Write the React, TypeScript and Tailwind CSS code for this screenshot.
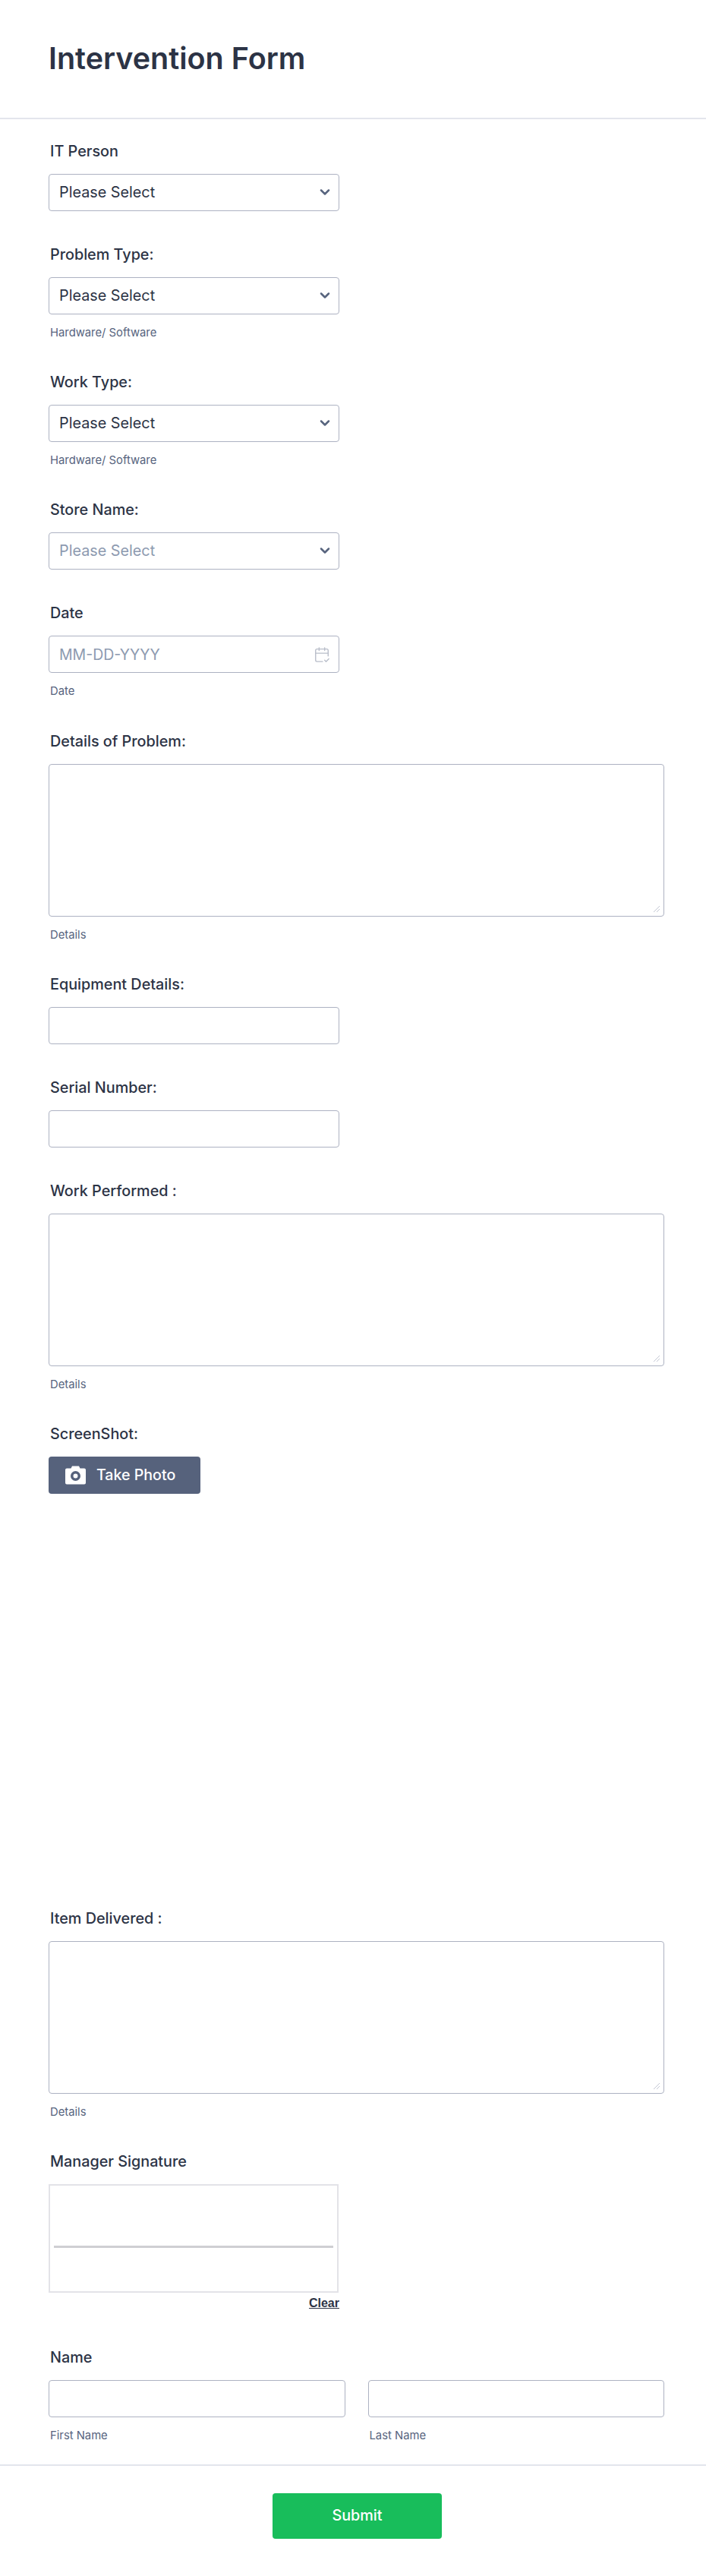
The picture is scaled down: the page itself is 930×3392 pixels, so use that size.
import { CalendarCheck2, ChevronDown } from "lucide-react";

const fieldBorder = "rounded-[4px] border border-[#adb2c2] bg-white";

function Label({ children }: { children: React.ReactNode }) {
  return <label className="mb-[18px] block h-[24px] px-[2px] text-[19.8px] leading-[24px] font-[450] text-[#2c3345]">{children}</label>;
}

function Sub({ children }: { children: React.ReactNode }) {
  return <div className="mt-[14px] h-[20px] px-[2px] text-[14.8px] leading-[20px] text-[#57647e]">{children}</div>;
}

function SelectBox({ muted }: { muted?: boolean }) {
  return (
    <div className="relative w-[383px]">
      <select
        className={`h-[49px] w-full appearance-none px-[13px] text-[19.8px] outline-none ${fieldBorder} ${muted ? "text-[#8d9ab0]" : "text-[#2c3345]"}`}
      >
        <option>Please Select</option>
      </select>
      <ChevronDown className="pointer-events-none absolute right-[9px] top-[14px] size-[20px] text-[#57647e]" strokeWidth={3} />
    </div>
  );
}

function TextBox() {
  return <input type="text" className={`block h-[49px] w-[383px] outline-none ${fieldBorder}`} />;
}

function Area() {
  return (
    <div className="relative">
      <textarea className={`block h-[201px] w-full resize-none outline-none ${fieldBorder}`} />
      <svg width="10" height="10" viewBox="0 0 10 10" className="pointer-events-none absolute bottom-[5px] right-[5px]">
        <path d="M1 9 9 1M5 9 9 5" stroke="#c4c8d4" strokeWidth="1" fill="none" />
      </svg>
    </div>
  );
}

function CameraIcon() {
  return (
    <svg width="27" height="25" viewBox="0 0 27 25" className="shrink-0">
      <path
        fill="#fff"
        fillRule="evenodd"
        d="M9 0.5h9l1.5 3h5.5a2 2 0 0 1 2 2v17a2 2 0 0 1-2 2H2a2 2 0 0 1-2-2v-17a2 2 0 0 1 2-2h5.5zM13.5 7a6.5 6.5 0 1 0 0 13 6.5 6.5 0 0 0 0-13zM13.5 10.5a3 3 0 1 1 0 6 3 3 0 0 1 0-6z"
      />
    </svg>
  );
}

export default function App() {
  return (
    <div className="flex min-h-[3392px] w-[930px] flex-col bg-white font-['Inter',sans-serif] text-[#2c3345]">
      <header className="h-[157px] border-b-2 border-[#e3e5ed] pl-[64px] pt-[50px]">
        <h1 className="text-[39.5px] leading-[54px] font-semibold">Intervention Form</h1>
      </header>

      <main className="pl-[64px] pr-[55px] pt-[30px]">
        <div className="pb-[45px]">
          <Label>IT Person</Label>
          <SelectBox />
        </div>
        <div className="pb-[43px]">
          <Label>Problem Type:</Label>
          <SelectBox />
          <Sub>Hardware/ Software</Sub>
        </div>
        <div className="pb-[43px]">
          <Label>Work Type:</Label>
          <SelectBox />
          <Sub>Hardware/ Software</Sub>
        </div>
        <div className="pb-[45px]">
          <Label>Store Name:</Label>
          <SelectBox muted />
        </div>
        <div className="pb-[44px]">
          <Label>Date</Label>
          <div className="relative w-[383px]">
            <input
              type="text"
              placeholder="MM-DD-YYYY"
              className={`block h-[49px] w-full px-[13px] text-[19.5px] outline-none placeholder:text-[#8d9ab0] ${fieldBorder}`}
            />
            <CalendarCheck2 className="pointer-events-none absolute right-[12px] top-[14px] size-[22px] text-[#b8bdc9]" strokeWidth={1.5} />
          </div>
          <Sub>Date</Sub>
        </div>
        <div className="pb-[43px]">
          <Label>Details of Problem:</Label>
          <Area />
          <Sub>Details</Sub>
        </div>
        <div className="pb-[45px]">
          <Label>Equipment Details:</Label>
          <TextBox />
        </div>
        <div className="pb-[45px]">
          <Label>Serial Number:</Label>
          <TextBox />
        </div>
        <div className="pb-[43px]">
          <Label>Work Performed :</Label>
          <Area />
          <Sub>Details</Sub>
        </div>
        <div className="pb-[547px]">
          <Label>ScreenShot:</Label>
          <button className="flex h-[49px] w-[200px] items-center gap-[14px] rounded-[4px] bg-[#56627c] pl-[22px] text-[19.6px] font-[450] text-white">
            <CameraIcon />
            Take Photo
          </button>
        </div>
        <div className="pb-[43px]">
          <Label>Item Delivered :</Label>
          <Area />
          <Sub>Details</Sub>
        </div>
        <div className="pb-[49px]">
          <Label>Manager Signature</Label>
          <div className="h-[143px] w-[382px] border-2 border-[#e3e3e8] px-[5px] pt-[79px]">
            <div className="h-[3px] w-full bg-[#cfcfd3]" />
          </div>
          <div className="w-[383px] pt-[3px] text-right leading-[20px]">
            <span className="font-['Liberation_Sans',sans-serif] text-[16px] leading-[20px] font-bold text-[#2c3345] underline">Clear</span>
          </div>
        </div>
        <div>
          <Label>Name</Label>
          <div className="flex gap-[30px]">
            <div className="flex-1">
              <input type="text" className={`block h-[49px] w-full outline-none ${fieldBorder}`} />
              <Sub>First Name</Sub>
            </div>
            <div className="flex-1">
              <input type="text" className={`block h-[49px] w-full outline-none ${fieldBorder}`} />
              <Sub>Last Name</Sub>
            </div>
          </div>
        </div>
      </main>

      <footer className="mt-[28px] flex justify-center border-t-2 border-[#e3e5ed] pl-[11px] pt-[36px]">
        <button className="h-[60px] w-[223px] rounded-[4px] bg-[#18bd5b] text-[19.8px] font-[450] text-white">Submit</button>
      </footer>
    </div>
  );
}
